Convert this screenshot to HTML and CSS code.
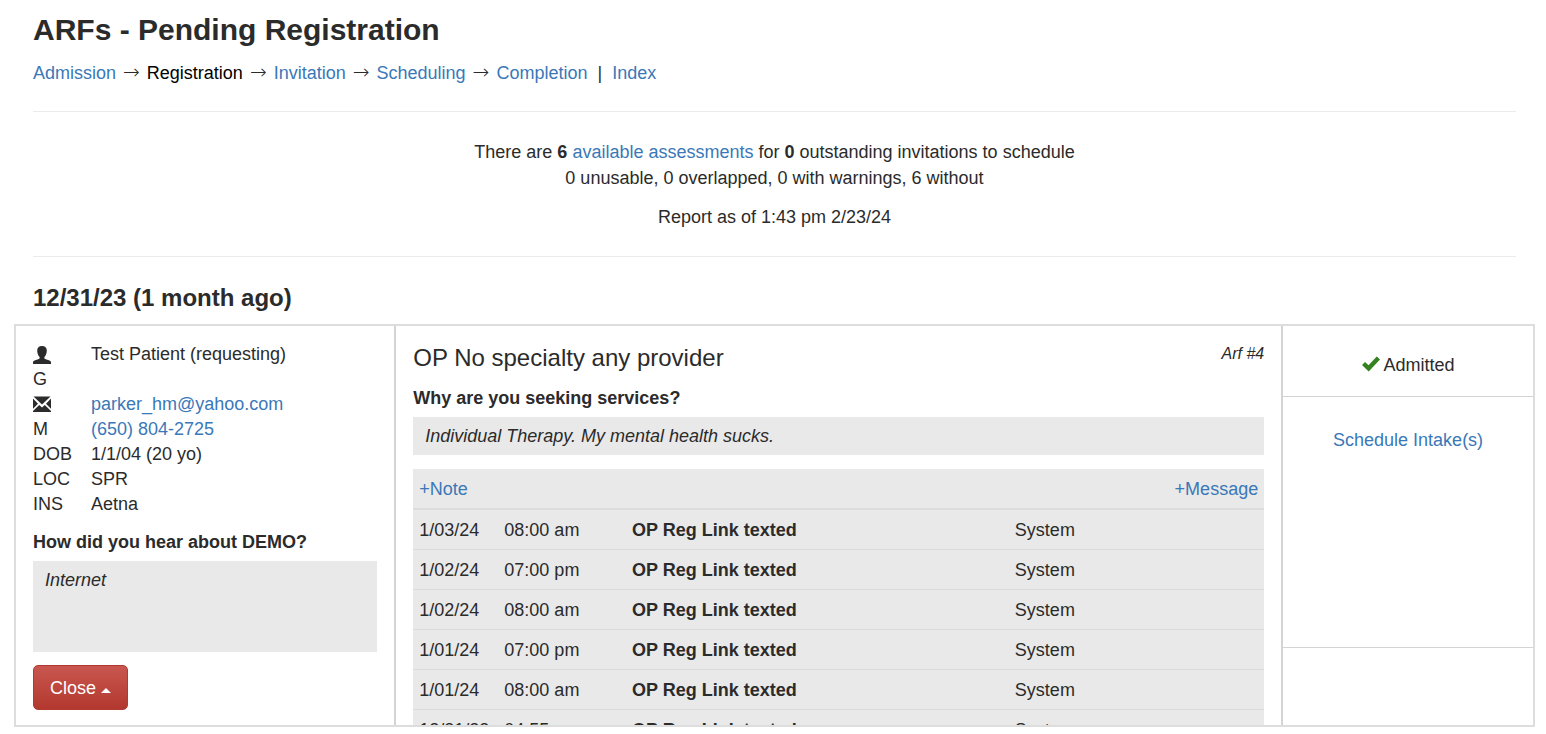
FILE: index.html
```html
<!DOCTYPE html>
<html lang="en">
<head>
    <meta charset="UTF-8">
    <meta name="viewport" content="width=device-width, initial-scale=1.0">
    <title>ARFs - Pending Registration</title>
    <link rel="stylesheet" href="styles.css">
</head>
<body>
    <header class="page-header">
        <h1>ARFs - Pending Registration</h1>
        <nav class="steps">
            <a href="#">Admission</a> <span class="arrow">→</span> <span class="current">Registration</span> <span class="arrow">→</span> <a href="#">Invitation</a> <span class="arrow">→</span> <a href="#">Scheduling</a> <span class="arrow">→</span> <a href="#">Completion</a> <span class="divider">|</span> <a href="#">Index</a>
        </nav>
    </header>

    <section class="summary">
        <p>There are <strong>6</strong> <a href="#">available assessments</a> for <strong>0</strong> outstanding invitations to schedule<br>
        0 unusable, 0 overlapped, 0 with warnings, 6 without</p>
        <p>Report as of 1:43 pm 2/23/24</p>
    </section>

    <h2>12/31/23 (1 month ago)</h2>

    <main class="arf">
        <section class="patient">
            <table class="info">
                <tr>
                    <th scope="row">
                        <svg class="icon" viewBox="0 0 18 18" role="img" aria-label="Patient">
                            <path d="M9 0C5.800 0 4.200 1.800 4.200 4.600C4.200 7 5 9.600 6.600 11V12.200C6.600 12.700 6 12.900 5.200 13.200L1.500 14.600C0.400 15.100 0 15.700 0 16.600V18H18V16.600C18 15.700 17.600 15.100 16.500 14.600L12.800 13.200C12 12.900 11.400 12.700 11.400 12.200V11C13 9.600 13.800 7 13.800 4.600C13.800 1.800 12.200 0 9 0Z"/>
                        </svg>
                    </th>
                    <td>Test Patient (requesting)</td>
                </tr>
                <tr>
                    <th scope="row">G</th>
                    <td></td>
                </tr>
                <tr>
                    <th scope="row">
                        <svg class="icon" viewBox="0 0 18 18" role="img" aria-label="Email">
                            <path d="M0.500 0.500H17.500L9 8.500ZM0 2.500L5 7.700L0 12.800ZM18 2.500L13 7.700L18 12.800ZM0 16V15L6.200 8.900L9 11.600L11.800 8.900L18 15V16Z"/>
                        </svg>
                    </th>
                    <td><a href="mailto:parker_hm@yahoo.com">parker_hm@yahoo.com</a></td>
                </tr>
                <tr>
                    <th scope="row">M</th>
                    <td><a href="tel:6508042725">(650) 804-2725</a></td>
                </tr>
                <tr>
                    <th scope="row">DOB</th>
                    <td>1/1/04 (20 yo)</td>
                </tr>
                <tr>
                    <th scope="row">LOC</th>
                    <td>SPR</td>
                </tr>
                <tr>
                    <th scope="row">INS</th>
                    <td>Aetna</td>
                </tr>
            </table>
            <h4>How did you hear about DEMO?</h4>
            <div class="answer answer-tall">Internet</div>
            <button type="button" class="btn-close">Close <span class="caret"></span></button>
        </section>

        <section class="request">
            <div class="request-title">
                <h3>OP No specialty any provider</h3>
                <em>Arf #4</em>
            </div>
            <h4>Why are you seeking services?</h4>
            <div class="answer">Individual Therapy. My mental health sucks.</div>
            <table class="log">
                <thead>
                    <tr>
                        <td colspan="3"><a href="#">+Note</a></td>
                        <td class="right"><a href="#">+Message</a></td>
                    </tr>
                </thead>
                <tbody>
                    <tr>
                        <td class="date">1/03/24</td>
                        <td class="time">08:00 am</td>
                        <td class="event">OP Reg Link texted</td>
                        <td>System</td>
                    </tr>
                    <tr>
                        <td>1/02/24</td>
                        <td>07:00 pm</td>
                        <td class="event">OP Reg Link texted</td>
                        <td>System</td>
                    </tr>
                    <tr>
                        <td>1/02/24</td>
                        <td>08:00 am</td>
                        <td class="event">OP Reg Link texted</td>
                        <td>System</td>
                    </tr>
                    <tr>
                        <td>1/01/24</td>
                        <td>07:00 pm</td>
                        <td class="event">OP Reg Link texted</td>
                        <td>System</td>
                    </tr>
                    <tr>
                        <td>1/01/24</td>
                        <td>08:00 am</td>
                        <td class="event">OP Reg Link texted</td>
                        <td>System</td>
                    </tr>
                    <tr>
                        <td>12/31/23</td>
                        <td>04:55 pm</td>
                        <td class="event">OP Reg Link texted</td>
                        <td>System</td>
                    </tr>
                </tbody>
            </table>
        </section>

        <section class="status">
            <div class="admitted">
                <svg class="check" viewBox="0 0 18 16" aria-hidden="true">
                    <path d="M0 9L3 6L6.500 9.300L14.800 0.500L18 3.400L6.700 15.500Z"/>
                </svg>
                Admitted
            </div>
            <div class="schedule"><a href="#">Schedule Intake(s)</a></div>
            <div></div>
        </section>
    </main>
</body>
</html>
```

FILE: styles.css
```css
* {
    box-sizing: border-box;
}
body {
    font-family: "Helvetica Neue", "Liberation Sans", Arial, sans-serif;
    font-size: 18px;
    line-height: 26px;
    color: #2b2b2b;
    background-color: #fff;
    margin: 0;
    padding: 10px 11px 6px 14px;
}
a {
    color: #3a78b8;
    text-decoration: none;
}
a:hover {
    text-decoration: underline;
}
h1, h2, h3, h4, p {
    margin: 0;
}
h1 {
    font-size: 30px;
    line-height: 40px;
}
h2 {
    font-size: 24px;
    line-height: 28px;
    margin: 27px 19px 12px;
}
h3 {
    font-size: 24px;
    line-height: 28px;
    font-weight: normal;
}
h4 {
    font-size: 18px;
    line-height: 26px;
}
.page-header, .summary {
    margin: 0 19px;
    border-bottom: 1px solid #eaeaea;
}
.page-header {
    padding-bottom: 25px;
}
.steps {
    margin-top: 10px;
}
.steps .current {
    color: #000;
}
.steps .arrow {
    font-family: "DejaVu Sans", sans-serif;
    font-size: 20px;
    font-weight: 200;
    line-height: 20px;
    margin: 0 2px;
}
.steps .divider {
    margin: 0 5px;
}
.summary {
    padding: 27px 0 26px;
    text-align: center;
}
.summary p + p {
    margin-top: 13px;
}

/* one request: patient, request log, status */
.arf {
    display: grid;
    grid-template-columns: calc(25% - 1px) 1fr calc(100% / 6 - 1px);
    max-height: 403px;
    border: 2px solid #ddd;
    overflow: hidden;
}
.patient, .request {
    min-width: 0;
    padding: 16px 17px;
}
.request {
    padding-top: 17px;
}
.request, .status {
    border-left: 2px solid #d4d4d4;
}
.info {
    border-collapse: collapse;
    line-height: 25px;
    margin-bottom: 12px;
}
.info th, .info td {
    padding: 0;
    height: 25px;
    text-align: left;
}
.info th {
    width: 58px;
    font-weight: normal;
}
.icon {
    display: block;
    width: 18px;
    height: 18px;
    fill: #2b2b2b;
}
.answer {
    background-color: #e9e9e9;
    font-style: italic;
    padding: 6px 12px;
    margin: 6px 0 13px;
}
.answer-tall {
    min-height: 91px;
}
.btn-close {
    display: block;
    height: 45px;
    padding: 0 16px;
    font: inherit;
    color: #fff;
    background: linear-gradient(#c9574f, #b2382f);
    border: 1px solid #b03a32;
    border-radius: 5px;
    cursor: pointer;
}
.caret {
    display: inline-block;
    border-left: 5px solid transparent;
    border-right: 5px solid transparent;
    border-bottom: 5px solid #fff;
    vertical-align: 1px;
}
.request-title {
    display: flex;
    justify-content: space-between;
    margin: 1px 0 13px;
}
.request-title em {
    font-size: 16px;
    line-height: 20px;
}
.log {
    width: 100%;
    margin-top: 14px;
    border-spacing: 0;
    background-color: #e9e9e9;
}
.log td {
    height: 40px;
    padding: 0 6px;
    border-bottom: 1px solid #dcdcdc;
}
.log thead td {
    height: 41px;
    border-bottom-width: 2px;
}
.log .date {
    width: 10%;
}
.log .time {
    width: 15%;
}
.log .event {
    width: 45%;
    font-weight: bold;
}
.log .right {
    text-align: right;
}
.status {
    display: grid;
    grid-template-rows: 71px 251px 1fr;
    text-align: center;
}
.admitted, .schedule {
    border-bottom: 1px solid #d4d4d4;
}
.admitted {
    padding-top: 26px;
}
.schedule {
    padding-top: 30px;
}
.check {
    width: 18px;
    height: 16px;
    fill: #35811f;
    vertical-align: -1px;
}
```
